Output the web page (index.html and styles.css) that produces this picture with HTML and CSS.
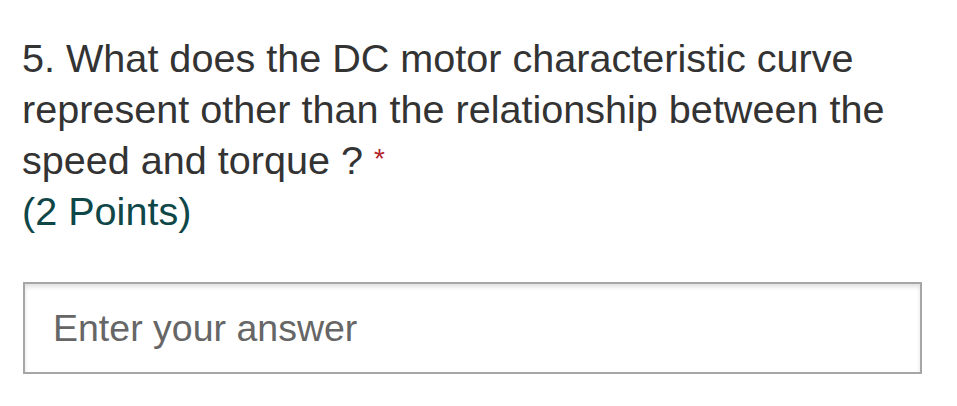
FILE: index.html
```html
<!DOCTYPE html>
<html>
<head>
<meta charset="utf-8">
<link rel="stylesheet" href="styles.css">
</head>
<body>
<div class="question">
  <div class="title">5. What does the DC motor characteristic curve represent other than the relationship between the speed and torque ? <span class="req">*</span></div>
  <div class="points">(2 Points)</div>
  <div class="answer"><span class="placeholder">Enter your answer</span></div>
</div>
</body>
</html>
```
FILE: styles.css
```css
html, body { margin: 0; padding: 0; background: #fff; }
body { font-family: "Liberation Sans", Arial, sans-serif; }
.question { padding: 33px 0 0 22px; width: 910px; }
.title { font-size: 39.6px; line-height: 51px; color: #333; }
.req { color: #b3262e; font-size: 28px; line-height: 1; vertical-align: 6px; }
.points { font-size: 39.6px; line-height: 51px; color: #0f4748; }
.answer { margin: 45px 0 0 1px; width: 899px; height: 92px; border: 2px solid #a6a6a6; box-shadow: inset 0 3px 4px rgba(0,0,0,0.12); box-sizing: border-box; display: flex; align-items: center; padding-left: 28px; }
.placeholder { font-size: 37.5px; color: #666; }
```
